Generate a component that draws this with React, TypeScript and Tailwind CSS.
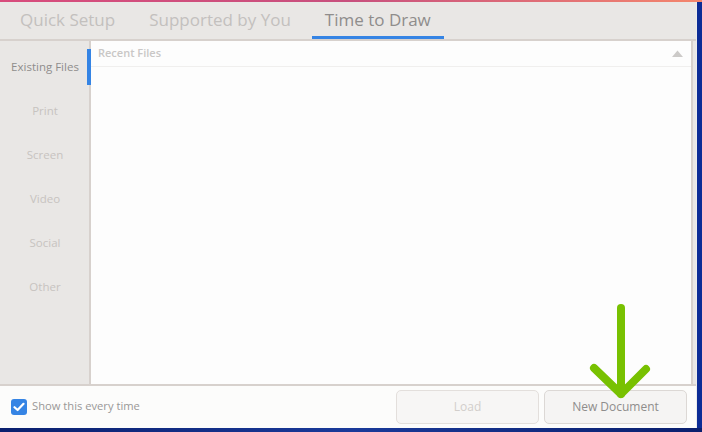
import React from 'react';

const tabs = [
  { label: 'Quick Setup', active: false },
  { label: 'Supported by You', active: false },
  { label: 'Time to Draw', active: true },
];

const sideItems = ['Existing Files', 'Print', 'Screen', 'Video', 'Social', 'Other'];

const GreenArrow: React.FC = () => (
  <svg className="absolute left-[580px] top-[298px]" width="80" height="108" viewBox="0 0 80 108">
    <g stroke="#78c101" strokeWidth="8" strokeLinecap="round" strokeLinejoin="round" fill="none">
      <path d="M41 10 L41 96" />
      <path d="M14 70 L41 96 L66 71" />
    </g>
  </svg>
);

const App: React.FC = () => {
  return (
    <div
      className="relative w-[702px] h-[432px] overflow-hidden bg-[#0c2c96]"
      style={{ fontFamily: '"Open Sans", "Noto Sans", sans-serif' }}
    >
      <div className="h-[2px] bg-gradient-to-r from-[#d84c7c] via-[#c8507e] to-[#f4866c]" />
      <div className="flex flex-col w-[697px] h-[426px] bg-[#fcfcfb] border-r border-[#ececec]">
        {/* tab bar */}
        <div className="flex h-[37px] bg-[#e9e7e5] pl-[7px] gap-2">
          {tabs.map(t => (
            <div
              key={t.label}
              className={`flex items-center px-[13px] text-[17px] leading-none border-b-[3px] ${
                t.active ? 'text-[#8f8d8c] border-[#3584e4]' : 'text-[#c3c0be] border-transparent'
              }`}
            >
              <span className="pt-[1px]">{t.label}</span>
            </div>
          ))}
        </div>

        {/* body */}
        <div className="flex h-[347px] border-t-2 border-b-2 border-[#d7d1cd] bg-[#e9e7e5]">
          <div className="w-[89px] pl-[1px] pt-[4px] flex flex-col">
            {sideItems.map((s, i) => (
              <div key={s} className="relative h-[44px] flex items-center justify-center">
                <span className={`text-[11.5px] ${i === 0 ? 'text-[#8f8d8c]' : 'text-[#c7c3c0]'}`}>{s}</span>
                {i === 0 && <div className="absolute right-[-2px] top-[4px] h-[36px] w-[4px] bg-[#3584e4]" />}
              </div>
            ))}
          </div>
          <div className="flex-1 flex flex-col bg-[#fdfdfd] border-l-2 border-r-2 border-[#d7d1cd] mr-[3px]">
            <div className="flex items-center justify-between h-[26px] pl-[7px] pr-[8px] border-b border-[#f0efee]">
              <span className="text-[11px] font-semibold text-[#c9c7c6]">Recent Files</span>
              <svg width="11" height="7" viewBox="0 0 11 7">
                <path d="M0 7 L5.5 0.5 L11 7 Z" fill="#cccac8" />
              </svg>
            </div>
            <div className="flex-1" />
          </div>
        </div>

        {/* footer */}
        <div className="flex-1 flex items-start justify-between pl-[11px] pr-[9px] pt-[4px]">
          <div className="flex items-center gap-[5px] h-[33px]">
            <div className="w-[16px] h-[16px] rounded-[3px] bg-[#3584e4] flex items-center justify-center">
              <svg width="12" height="10" viewBox="0 0 12 10">
                <path d="M1.5 5.2 L4.6 8 L10.5 1.8" stroke="#fff" strokeWidth="2.2" fill="none" strokeLinecap="round" strokeLinejoin="round" />
              </svg>
            </div>
            <span className="text-[11.2px] text-[#9a9897]">Show this every time</span>
          </div>
          <div className="flex gap-[5px]">
            <button className="w-[143px] h-[34px] rounded-[5px] border border-[#e3dfdc] bg-[#f7f6f5] text-[12px] text-[#d2cecb]">
              Load
            </button>
            <button className="w-[143px] h-[34px] rounded-[5px] border border-[#dcd8d5] bg-[#f5f4f3] text-[12px] text-[#8f8d8c]">
              New Document
            </button>
          </div>
        </div>
      </div>
      <div className="absolute left-0 right-0 bottom-0 h-[4px] bg-gradient-to-r from-[#0a1f6e] via-[#1a3a9a] to-[#0a1f6e]" />
      <GreenArrow />
    </div>
  );
};

export default App;
